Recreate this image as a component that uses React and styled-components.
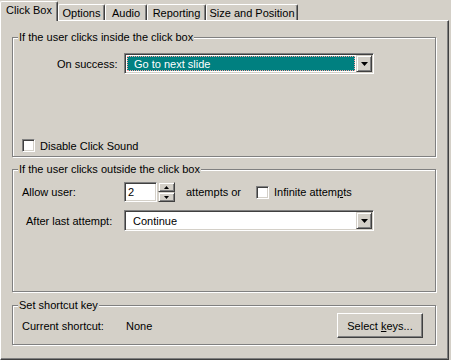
import React from "react";
import styled, { createGlobalStyle, css } from "styled-components";

const face = "#d4d0c8";
const shadow = "#808080";
const dark = "#404040";

const GlobalStyle = createGlobalStyle`
  html, body {
    margin: 0;
    background: ${face};
  }
  body {
    font-family: "Liberation Sans", Arial, sans-serif;
    font-size: 11px;
    color: #000;
  }
`;

const sunken = css`
  border: 1px solid;
  border-color: ${shadow} #fff #fff ${shadow};
  box-shadow: inset 1px 1px 0 ${dark}, inset -1px -1px 0 ${face};
`;

const raised = css`
  border: 1px solid;
  border-color: ${face} ${dark} ${dark} ${face};
  box-shadow: inset 1px 1px 0 #fff, inset -1px -1px 0 ${shadow};
`;

const Dialog = styled.div`
  width: 449px;
  height: 360px;
  display: flex;
  flex-direction: column;
  box-sizing: border-box;
`;

const TabStrip = styled.div`
  display: flex;
  align-items: flex-end;
  height: 20px;
  flex-shrink: 0;
`;

const Tab = styled.div`
  box-sizing: border-box;
  width: ${({ $w }) => $w}px;
  height: ${({ $active }) => ($active ? 20 : 16)}px;
  margin-bottom: ${({ $active }) => ($active ? -1 : 0)}px;
  padding-bottom: ${({ $active }) => ($active ? 3 : 0)}px;
  position: relative;
  z-index: ${({ $active }) => ($active ? 2 : 0)};
  background: ${face};
  border-top: 1px solid #fff;
  border-left: 1px solid #fff;
  border-right: 1px solid ${dark};
  border-radius: 2px 2px 0 0;
  box-shadow: inset -1px 0 0 ${shadow};
  display: flex;
  align-items: center;
  justify-content: center;
  white-space: nowrap;
`;

const Panel = styled.div`
  flex: 1;
  position: relative;
  z-index: 1;
  box-sizing: border-box;
  border-top: 1px solid #fff;
  border-left: 1px solid #fff;
  border-right: 1px solid ${dark};
  border-bottom: 1px solid ${dark};
  box-shadow: inset -1px -1px 0 ${shadow};
  padding: 10px 0 0 11px;
  display: flex;
  flex-direction: column;
`;

const Group = styled.fieldset`
  box-sizing: border-box;
  width: 424px;
  height: ${({ $h }) => $h}px;
  margin: ${({ $mt }) => $mt}px 0 0 0;
  padding: 0;
  min-inline-size: 0;
  border: 1px solid ${shadow};
  box-shadow: inset 1px 1px 0 #fff, 1px 1px 0 #fff;
`;

const Legend = styled.legend`
  padding: 0 1px;
  margin-left: 5px;
  line-height: 13px;
  background: ${face};
`;

const Row = styled.div`
  display: flex;
  align-items: center;
  padding-left: ${({ $indent }) => $indent}px;
  margin-top: ${({ $top }) => $top || 0}px;
`;

const Label = styled.span`
  width: ${({ $w }) => $w}px;
  flex-shrink: 0;
  white-space: nowrap;
`;

const Text = styled.span`
  margin-left: ${({ $ml }) => $ml || 0}px;
  white-space: nowrap;
`;

const Combo = styled.div`
  ${sunken};
  box-sizing: border-box;
  width: ${({ $w }) => $w}px;
  height: 21px;
  background: #fff;
  display: flex;
  padding: 2px;
`;

const ComboField = styled.div`
  flex: 1;
  box-sizing: border-box;
  margin: 0 1px 0 0;
  padding-left: ${({ $selected }) => ($selected ? 6 : 5)}px;
  display: flex;
  align-items: center;
  background: ${({ $selected }) => ($selected ? "#008080" : "#fff")};
  color: ${({ $selected }) => ($selected ? "#fff" : "#000")};
  border: 1px dotted ${({ $selected }) => ($selected ? "#ffa0a0" : "transparent")};
`;

const DropButton = styled.div`
  ${raised};
  box-sizing: border-box;
  width: 16px;
  height: 17px;
  margin: -1px -1px 0 0;
  background: ${face};
  display: flex;
  align-items: center;
  justify-content: center;
`;

const Edit = styled.div`
  ${sunken};
  box-sizing: border-box;
  width: 33px;
  height: 20px;
  background: #fff;
  padding-left: 3px;
  display: flex;
  align-items: center;
`;

const Spin = styled.div`
  display: flex;
  flex-direction: column;
  margin-left: 1px;
`;

const SpinButton = styled.div`
  ${raised};
  box-sizing: border-box;
  width: 17px;
  height: 10px;
  background: ${face};
  display: flex;
  align-items: center;
  justify-content: center;
`;

const CheckRow = styled.label`
  display: flex;
  align-items: center;
  gap: 5px;
  margin-left: ${({ $ml }) => $ml || 0}px;
  white-space: nowrap;
`;

const CheckBox = styled.span`
  ${sunken};
  box-sizing: border-box;
  width: 13px;
  height: 13px;
  background: #fff;
  flex-shrink: 0;
`;

const Button = styled.button`
  font: inherit;
  color: #000;
  box-sizing: border-box;
  width: 86px;
  height: 25px;
  margin-left: auto;
  margin-right: 12px;
  padding: 0;
  background: ${face};
  border: 1px solid;
  border-color: #fff ${dark} ${dark} #fff;
  box-shadow: inset -1px -1px 0 ${shadow};
`;

const Arrow = ({ up, w = 7, h = 4 }) => (
  <svg width={w} height={h} viewBox={`0 0 ${w} ${h}`}>
    <polygon
      points={up ? `${w / 2},0 ${w},${h} 0,${h}` : `0,0 ${w},0 ${w / 2},${h}`}
      fill="#000"
    />
  </svg>
);

const ComboBox = ({ value, selected, width }) => (
  <Combo $w={width}>
    <ComboField $selected={selected}>{value}</ComboField>
    <DropButton>
      <Arrow w={7} h={4} />
    </DropButton>
  </Combo>
);

const tabs = [
  { name: "Click Box", w: 58 },
  { name: "Options", w: 47 },
  { name: "Audio", w: 42 },
  { name: "Reporting", w: 59 },
  { name: "Size and Position", w: 92 },
];

const App = () => {
  return (
    <>
      <GlobalStyle />
      <Dialog>
        <TabStrip>
          {tabs.map((t, i) => (
            <Tab key={t.name} $w={t.w} $active={i === 0}>
              {t.name}
            </Tab>
          ))}
        </TabStrip>
        <Panel>
          <Group $h={126} $mt={0}>
            <Legend>If the user clicks inside the click box</Legend>
            <Row $indent={44} $top={9}>
              <Label $w={67}>On success:</Label>
              <ComboBox value="Go to next slide" selected width={250} />
            </Row>
            <Row $indent={9} $top={65}>
              <CheckRow>
                <CheckBox />
                Disable Click Sound
              </CheckRow>
            </Row>
          </Group>

          <Group $h={129} $mt={6}>
            <Legend>If the user clicks outside the click box</Legend>
            <Row $indent={9} $top={6}>
              <Label $w={102}>Allow user:</Label>
              <Edit>2</Edit>
              <Spin>
                <SpinButton>
                  <Arrow up w={5} h={3} />
                </SpinButton>
                <SpinButton>
                  <Arrow w={5} h={3} />
                </SpinButton>
              </Spin>
              <Text $ml={11}>attempts or</Text>
              <CheckRow $ml={15}>
                <CheckBox />
                <span>
                  Infinite attem<u>p</u>ts
                </span>
              </CheckRow>
            </Row>
            <Row $indent={13} $top={8}>
              <Label $w={98}>After last attempt:</Label>
              <ComboBox value="Continue" width={250} />
            </Row>
          </Group>

          <Group $h={46} $mt={7}>
            <Legend>Set shortcut key</Legend>
            <Row $indent={9} $top={1}>
              <Label $w={104}>Current shortcut:</Label>
              <Text>None</Text>
              <Button>
                Select <u>k</u>eys...
              </Button>
            </Row>
          </Group>
        </Panel>
      </Dialog>
    </>
  );
};

export default App;
